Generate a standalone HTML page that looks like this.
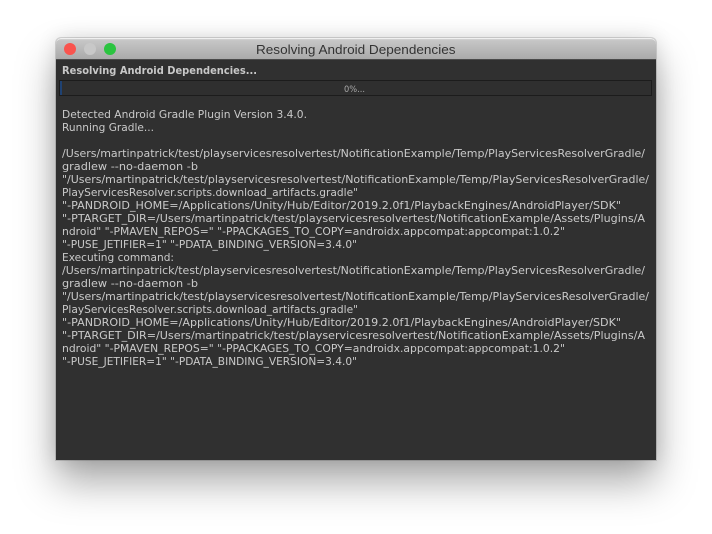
<!DOCTYPE html>
<html>
<head>
<meta charset="utf-8">
<style>
html,body{margin:0;padding:0;width:712px;height:534px;overflow:hidden;background:#fff}
#win{position:absolute;left:56px;top:38px;width:600px;height:422px;border-radius:5px 5px 0 0;background:#303030;box-shadow:0 0 0 1px rgba(0,0,0,.14),0 22px 40px rgba(0,0,0,.34),0 0 20px rgba(0,0,0,.12)}
#tb{position:absolute;left:0;top:0;width:600px;height:21px;border-radius:5px 5px 0 0;background:linear-gradient(#dcdcdc,#c6c6c6 12%,#aaaaaa);box-shadow:inset 0 1px 0 #f0f0f0}
#line{position:absolute;left:0;top:21px;width:600px;height:1px;background:#4a4a4a}
.d{position:absolute;width:12px;height:12px;border-radius:50%;top:5px}
#bar{position:absolute;left:3px;top:42px;width:591px;height:14px;border:1px solid #1c1c1c;background:#2f2f2f;box-sizing:content-box}
#fill{position:absolute;left:0;top:0;width:2px;height:14px;background:#1f4273}
svg{position:absolute;left:0;top:0}
text{font-family:"DejaVu Sans",sans-serif;font-size:10.5px;fill:#cacaca;white-space:pre}
</style>
</head>
<body>
<div id="win">
<div id="tb">
<div class="d" style="left:8px;background:#f9544e"></div>
<div class="d" style="left:28px;background:#c8c8c8"></div>
<div class="d" style="left:48px;background:#2bc440"></div>
</div>
<div id="line"></div>
<div id="bar"><div id="fill"></div></div>
</div>
<svg width="712" height="534" viewBox="0 0 712 534">
<text x="256" y="54" textLength="199.500" lengthAdjust="spacingAndGlyphs" style="font-family:'Liberation Sans',sans-serif;font-size:13px;fill:#333">Resolving Android Dependencies</text>
<text x="62" y="74" textLength="195" lengthAdjust="spacingAndGlyphs" style="font-weight:bold;font-size:10.5px;fill:#c8c8c8">Resolving Android Dependencies...</text>
<text x="344" y="92" textLength="21" lengthAdjust="spacingAndGlyphs" style="font-size:8.500px;fill:#aaa">0%...</text>
<text x="62" y="118" textLength="245" lengthAdjust="spacingAndGlyphs">Detected Android Gradle Plugin Version 3.4.0.</text>
<text x="62" y="131" textLength="92" lengthAdjust="spacingAndGlyphs">Running Gradle...</text>
<text x="62" y="157" textLength="583" lengthAdjust="spacingAndGlyphs">/Users/martinpatrick/test/playservicesresolvertest/NotificationExample/Temp/PlayServicesResolverGradle/</text>
<text x="62" y="170" textLength="136" lengthAdjust="spacingAndGlyphs">gradlew --no-daemon -b</text>
<text x="62" y="183" textLength="587" lengthAdjust="spacingAndGlyphs">"/Users/martinpatrick/test/playservicesresolvertest/NotificationExample/Temp/PlayServicesResolverGradle/</text>
<text x="62" y="196" textLength="296" lengthAdjust="spacingAndGlyphs">PlayServicesResolver.scripts.download_artifacts.gradle"</text>
<text x="62" y="209" textLength="559" lengthAdjust="spacingAndGlyphs">"-PANDROID_HOME=/Applications/Unity/Hub/Editor/2019.2.0f1/PlaybackEngines/AndroidPlayer/SDK"</text>
<text x="62" y="222" textLength="583" lengthAdjust="spacingAndGlyphs">"-PTARGET_DIR=/Users/martinpatrick/test/playservicesresolvertest/NotificationExample/Assets/Plugins/A</text>
<text x="62" y="235" textLength="503" lengthAdjust="spacingAndGlyphs">ndroid" "-PMAVEN_REPOS=" "-PPACKAGES_TO_COPY=androidx.appcompat:appcompat:1.0.2"</text>
<text x="62" y="248" textLength="295" lengthAdjust="spacingAndGlyphs">"-PUSE_JETIFIER=1" "-PDATA_BINDING_VERSION=3.4.0"</text>
<text x="62" y="261" textLength="112" lengthAdjust="spacingAndGlyphs">Executing command:</text>
<text x="62" y="274" textLength="583" lengthAdjust="spacingAndGlyphs">/Users/martinpatrick/test/playservicesresolvertest/NotificationExample/Temp/PlayServicesResolverGradle/</text>
<text x="62" y="287" textLength="136" lengthAdjust="spacingAndGlyphs">gradlew --no-daemon -b</text>
<text x="62" y="300" textLength="587" lengthAdjust="spacingAndGlyphs">"/Users/martinpatrick/test/playservicesresolvertest/NotificationExample/Temp/PlayServicesResolverGradle/</text>
<text x="62" y="313" textLength="296" lengthAdjust="spacingAndGlyphs">PlayServicesResolver.scripts.download_artifacts.gradle"</text>
<text x="62" y="326" textLength="559" lengthAdjust="spacingAndGlyphs">"-PANDROID_HOME=/Applications/Unity/Hub/Editor/2019.2.0f1/PlaybackEngines/AndroidPlayer/SDK"</text>
<text x="62" y="339" textLength="583" lengthAdjust="spacingAndGlyphs">"-PTARGET_DIR=/Users/martinpatrick/test/playservicesresolvertest/NotificationExample/Assets/Plugins/A</text>
<text x="62" y="352" textLength="503" lengthAdjust="spacingAndGlyphs">ndroid" "-PMAVEN_REPOS=" "-PPACKAGES_TO_COPY=androidx.appcompat:appcompat:1.0.2"</text>
<text x="62" y="365" textLength="295" lengthAdjust="spacingAndGlyphs">"-PUSE_JETIFIER=1" "-PDATA_BINDING_VERSION=3.4.0"</text>
</svg>
</body>
</html>
